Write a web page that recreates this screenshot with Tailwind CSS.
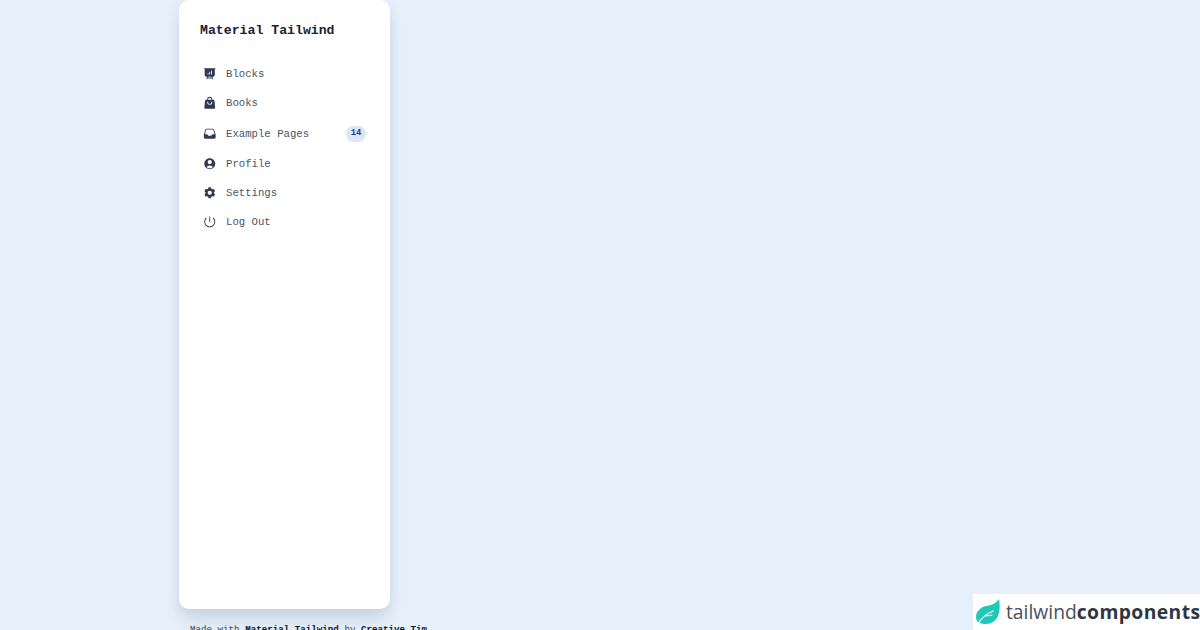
<!DOCTYPE html>
<html lang="en">
<head>
  <meta charset="UTF-8">
  <meta name="viewport" content="width=device-width, initial-scale=1.0">
  <title>Material Tailwind Sidebar</title>
  <script src="https://cdn.jsdelivr.net/npm/@tailwindcss/browser@4"></script>
</head>
<body class="relative h-[630px] overflow-hidden bg-[#e6f0fb] font-['Liberation_Mono',monospace]">
  <div class="ml-[179px] w-[261px]">
    <!-- Sidebar -->
    <aside class="flex h-[609px] w-[211px] flex-col rounded-[10px] bg-white pl-[21px] pr-[24px] text-[#4a5568] shadow-[0_13px_17px_-3px_rgba(15,40,80,0.12),0_2px_12px_1px_rgba(15,60,130,0.06)]">
      <h1 class="pt-[22px] text-[13.2px] leading-[18px] font-bold text-[#1a2233]">Material Tailwind</h1>

      <nav class="mt-[19px] flex flex-col text-[10.67px]">
        <a class="flex h-[29.3px] items-center gap-[10px] pl-[2.5px]">
          <svg class="size-[13.5px] text-[#2f3b52]" viewBox="0 0 24 24" fill="currentColor"><path fill-rule="evenodd" clip-rule="evenodd" d="M2.25 2.25a.75.75 0 000 1.5H3v10.5a3 3 0 003 3h1.21l-1.172 3.513a.75.75 0 001.424.474l.329-.987h8.418l.33.987a.75.75 0 001.422-.474l-1.17-3.513H18a3 3 0 003-3V3.75h.75a.75.75 0 000-1.5H2.25zm6.04 16.5l.5-1.5h6.42l.5 1.5H8.29zm7.46-12a.75.75 0 00-1.5 0v6a.75.75 0 001.5 0v-6zm-3 2.25a.75.75 0 00-1.5 0v3.75a.75.75 0 001.5 0V9zm-3 2.25a.75.75 0 00-1.5 0v1.5a.75.75 0 001.5 0v-1.5z"/></svg>
          Blocks
        </a>
        <a class="flex h-[29.3px] items-center gap-[10px] pl-[2.5px]">
          <svg class="size-[13.5px] text-[#2f3b52]" viewBox="0 0 24 24" fill="currentColor"><path fill-rule="evenodd" clip-rule="evenodd" d="M7.5 6v.75H5.513c-.96 0-1.764.724-1.865 1.679l-1.263 12A1.875 1.875 0 004.25 22.5h15.5a1.875 1.875 0 001.865-2.071l-1.263-12a1.875 1.875 0 00-1.865-1.679H16.5V6a4.5 4.5 0 10-9 0zM12 3a3 3 0 00-3 3v.75h6V6a3 3 0 00-3-3zm-3 8.25a3 3 0 106 0v-.75a.75.75 0 011.5 0v.75a4.5 4.5 0 11-9 0v-.75a.75.75 0 011.5 0v.75z"/></svg>
          Books
        </a>
        <a class="flex h-[32px] items-center gap-[10px] pl-[2.5px]">
          <svg class="size-[13.5px] text-[#2f3b52]" viewBox="0 0 24 24" fill="currentColor"><path fill-rule="evenodd" clip-rule="evenodd" d="M6.912 3a3 3 0 00-2.868 2.118l-2.411 7.838a3 3 0 00-.133.882V18a3 3 0 003 3h15a3 3 0 003-3v-4.162c0-.299-.045-.596-.133-.882l-2.412-7.838A3 3 0 0017.088 3H6.912zm13.823 9.75l-2.213-7.191A1.5 1.5 0 0017.088 4.5H6.912a1.5 1.5 0 00-1.434 1.059L3.265 12.75H6.11a3 3 0 012.684 1.658l.256.513a1.5 1.5 0 001.342.829h3.218a1.5 1.5 0 001.342-.83l.256-.512a3 3 0 012.684-1.658h2.844z"/></svg>
          Example Pages
          <span class="ml-auto flex h-[16px] w-[20px] items-center justify-center rounded-full bg-[#dbe6fb] text-[8.9px] font-bold text-[#1e3a8a]">14</span>
        </a>
        <a class="flex h-[28.6px] items-center gap-[10px] pl-[2.5px]">
          <svg class="size-[13.5px] text-[#2f3b52]" viewBox="0 0 24 24" fill="currentColor"><path fill-rule="evenodd" clip-rule="evenodd" d="M18.685 19.097A9.723 9.723 0 0021.75 12c0-5.385-4.365-9.75-9.75-9.75S2.25 6.615 2.25 12a9.723 9.723 0 003.065 7.097A9.716 9.716 0 0012 21.75a9.716 9.716 0 006.685-2.653zm-12.54-1.285A7.486 7.486 0 0112 15a7.486 7.486 0 015.855 2.812A8.224 8.224 0 0112 20.25a8.224 8.224 0 01-5.855-2.438zM15.75 9a3.75 3.75 0 11-7.5 0 3.75 3.75 0 017.5 0z"/></svg>
          Profile
        </a>
        <a class="flex h-[29.3px] items-center gap-[10px] pl-[2.5px]">
          <svg class="size-[13.5px] text-[#2f3b52]" viewBox="0 0 24 24" fill="currentColor"><path fill-rule="evenodd" clip-rule="evenodd" d="M11.078 2.25c-.917 0-1.699.663-1.85 1.567L9.05 4.889c-.02.12-.115.26-.297.348a7.493 7.493 0 00-.986.57c-.166.115-.334.126-.45.083L6.3 5.508a1.875 1.875 0 00-2.282.819l-.922 1.597a1.875 1.875 0 00.432 2.385l.84.692c.095.078.17.229.154.43a7.598 7.598 0 000 1.139c.015.2-.059.352-.153.43l-.841.692a1.875 1.875 0 00-.432 2.385l.922 1.597a1.875 1.875 0 002.282.818l1.019-.382c.115-.043.283-.031.45.082.312.214.641.405.985.57.182.088.277.228.297.35l.178 1.071c.151.904.933 1.567 1.85 1.567h1.844c.916 0 1.699-.663 1.85-1.567l.178-1.072c.02-.12.114-.26.297-.349.344-.165.673-.356.985-.57.167-.114.335-.125.45-.082l1.02.382a1.875 1.875 0 002.28-.819l.923-1.597a1.875 1.875 0 00-.432-2.385l-.84-.692c-.095-.078-.17-.229-.154-.43a7.614 7.614 0 000-1.139c-.016-.2.059-.352.153-.43l.84-.692c.708-.582.891-1.59.433-2.385l-.922-1.597a1.875 1.875 0 00-2.282-.818l-1.02.382c-.114.043-.282.031-.449-.083a7.49 7.49 0 00-.985-.57c-.183-.087-.277-.227-.297-.348l-.179-1.072a1.875 1.875 0 00-1.85-1.567h-1.843zM12 15.75a3.75 3.75 0 100-7.5 3.75 3.75 0 000 7.5z"/></svg>
          Settings
        </a>
        <a class="flex h-[29px] items-center gap-[10px] pl-[2.5px]">
          <svg class="size-[13.5px] text-[#2f3b52]" viewBox="0 0 24 24" fill="currentColor"><path fill-rule="evenodd" clip-rule="evenodd" d="M12 2.25a.75.75 0 01.75.75v9a.75.75 0 01-1.5 0V3a.75.75 0 01.75-.75zM6.166 5.106a.75.75 0 010 1.06 8.25 8.25 0 1011.668 0 .75.75 0 111.06-1.06c3.808 3.807 3.808 9.98 0 13.788-3.807 3.808-9.98 3.808-13.788 0-3.808-3.807-3.808-9.98 0-13.788a.75.75 0 011.06 0z"/></svg>
          Log Out
        </a>
      </nav>
    </aside>

    <p class="mt-[13px] ml-[11px] whitespace-nowrap text-[9.2px] leading-[16px] text-[#374151]">Made with <span class="font-bold text-[#111827]">Material Tailwind</span> by <span class="font-bold text-[#111827]">Creative Tim</span></p>
  </div>

  <!-- tailwindcomponents badge -->
  <div class="absolute right-0 bottom-0 flex h-[36px] w-[227px] items-center gap-[6px] bg-white pl-[3px] font-['Open_Sans',sans-serif] text-[19.3px] leading-none text-[#4a5160]">
    <svg class="h-[26px] w-[24px] shrink-0" viewBox="0 0 24 26">
      <path fill="#1fc8b8" d="M23 0c1 6 1 12-1 17-2 5-7 8-12 8-4 0-8-1-9-3-2-4-1-9 3-12 3-3 7-3 11-4 3-1 6-3 8-6z"/>
      <path fill="none" stroke="#fff" stroke-width="1.2" stroke-linecap="round" d="M2 25c3-6 8-10 15-13M9 17c2 0 5-.5 7-1"/>
    </svg>
    <span class="whitespace-nowrap"><span class="font-normal">tailwind</span><span class="font-bold tracking-[0.4px] text-[#2f3644]">components</span></span>
  </div>
</body>
</html>
